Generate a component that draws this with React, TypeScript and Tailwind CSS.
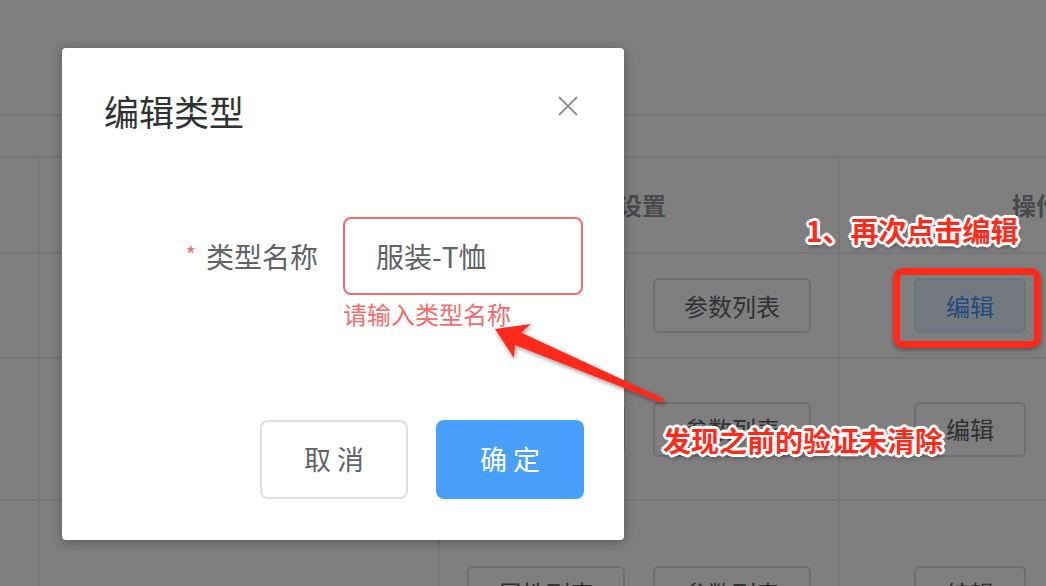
import React from "react";

function TBtn({ children, w = "w-[158px]" }: { children: React.ReactNode; w?: string }) {
  return (
    <div
      className={`flex h-[55px] ${w} shrink-0 items-center justify-center rounded-[6px] border-2 border-[#dcdfe6] bg-white text-[24px] leading-none text-[#606266]`}
    >
      {children}
    </div>
  );
}

function EditBtn({ active = false }: { active?: boolean }) {
  return (
    <div
      className={
        active
          ? "flex h-[55px] w-[112px] shrink-0 items-center justify-center rounded-[6px] border-2 border-[#c9f0ff] bg-[#e8f0ff] text-[24px] leading-none text-[#3f98f8]"
          : "flex h-[55px] w-[112px] shrink-0 items-center justify-center rounded-[6px] border-2 border-[#dcdfe6] bg-white text-[24px] leading-none text-[#606266]"
      }
    >
      编辑
    </div>
  );
}

function DataRow({ h, active = false, name = "" }: { h: string; active?: boolean; name?: string }) {
  return (
    <div className={`flex ${h} shrink-0 border-b-2 border-[#ebeef5]`}>
      <div className="w-[40px] shrink-0 border-r-2 border-[#ebeef5]" />
      <div className="flex w-[400px] shrink-0 items-center justify-center border-r-2 border-[#ebeef5] text-[24px] text-[#606266]">
        {name}
      </div>
      <div className="flex w-[400px] shrink-0 items-center gap-[28px] border-r-2 border-[#ebeef5] pl-[27px]">
        <TBtn>属性列表</TBtn>
        <TBtn>参数列表</TBtn>
      </div>
      <div className="flex flex-1 items-center pl-[74px]">
        <EditBtn active={active} />
      </div>
    </div>
  );
}

const outline =
  "[text-shadow:2px_0_0_#fff,-2px_0_0_#fff,0_2px_0_#fff,0_-2px_0_#fff,2px_2px_0_#fff,-2px_-2px_0_#fff,2px_-2px_0_#fff,-2px_2px_0_#fff,3px_0_0_#fff,-3px_0_0_#fff,0_3px_0_#fff,0_-3px_0_#fff,1px_4px_5px_rgba(0,0,0,0.45)]";

export default function App() {
  return (
    <div className="relative h-[586px] w-[1046px] overflow-hidden bg-white font-['Noto_Sans_CJK_SC','Noto_Sans',sans-serif]">
      {/* underlying page */}
      <div className="flex h-full flex-col">
        <div className="h-[116px] shrink-0 border-b-2 border-[#ebeef5]" />
        <div className="h-[42px] shrink-0 border-b-2 border-[#ebeef5]" />
        <div className="flex h-[96px] shrink-0 border-b-2 border-[#ebeef5] text-[24px] font-bold text-[#909399]">
          <div className="w-[40px] shrink-0 border-r-2 border-[#ebeef5]" />
          <div className="flex w-[400px] shrink-0 items-center justify-center border-r-2 border-[#ebeef5]">
            类型名称
          </div>
          <div className="flex w-[400px] shrink-0 items-center border-r-2 border-[#ebeef5] pl-[130px]">
            属性设置
          </div>
          <div className="flex flex-1 items-center whitespace-nowrap pl-[172px]">操作</div>
        </div>
        <DataRow h="h-[105px]" active name="手机" />
        <DataRow h="h-[142px]" name="电脑" />
        <DataRow h="h-[186px]" name="1" />
      </div>

      {/* modal mask */}
      <div className="absolute inset-0 bg-black/50" />

      {/* dialog */}
      <div className="absolute left-[62px] top-[48px] flex h-[492px] w-[562px] flex-col rounded-[4px] bg-white pt-[43px] shadow-[0_2px_12px_rgba(0,0,0,0.3)]">
        <div className="flex items-start justify-between pl-[42px] pr-[46px]">
          <div className="text-[35px] leading-[40px] text-[#303133]">编辑类型</div>
          <svg width="20" height="20" viewBox="0 0 20 20" className="mt-[5px]">
            <path d="M1 1 L19 19 M19 1 L1 19" stroke="#909399" strokeWidth="2" fill="none" />
          </svg>
        </div>

        <div className="mt-[86px] flex items-start pl-[42px]">
          <div className="flex h-[78px] w-[214px] items-center justify-end text-[28px] text-[#606266]">
            <span className="mb-[6px] mr-[10px] text-[22px] text-[#f56c6c]">*</span>
            类型名称
          </div>
          <div className="ml-[25px] flex flex-col">
            <div className="flex h-[78px] w-[240px] items-center rounded-[8px] border-2 border-[#f56c6c] pl-[31px] text-[28px] text-[#606266]">
              服装-T恤
            </div>
            <div className="mt-[5px] text-[24px] leading-[28px] text-[#f56c6c]">请输入类型名称</div>
          </div>
        </div>

        <div className="mt-[92px] flex justify-end gap-[28px] pr-[40px]">
          <div className="flex h-[79px] w-[148px] items-center justify-center rounded-[8px] border-2 border-[#dcdfe6] bg-white text-[27px] text-[#606266]">
            取&nbsp;消
          </div>
          <div className="flex h-[79px] w-[148px] items-center justify-center rounded-[8px] bg-[#48a0fc] text-[27px] text-white">
            确&nbsp;定
          </div>
        </div>
      </div>

      {/* annotations */}
      <div className="absolute left-[893px] top-[268px] h-[80px] w-[148px] rounded-[10px] border-[7px] border-[#ff2a1a] shadow-[0_2px_4px_rgba(0,0,0,0.35)]" />
      <div
        className={`absolute left-[806px] top-[212px] whitespace-nowrap text-[28px] font-bold leading-[36px] text-[#ff2a1a] ${outline}`}
      >
        1、再次点击编辑
      </div>
      <svg className="pointer-events-none absolute left-0 top-0" width="1046" height="586" viewBox="0 0 1046 586">
        <defs>
          <filter id="sh" x="-20%" y="-20%" width="140%" height="140%">
            <feDropShadow dx="1" dy="2" stdDeviation="2" floodColor="#000" floodOpacity="0.4" />
          </filter>
        </defs>
        <polygon
          points="495,329 531,324 521,332.5 664,399 662,403 515,345 514,358"
          fill="#ff2a1a"
          filter="url(#sh)"
        />
      </svg>
      <div
        className={`absolute left-[663px] top-[422px] whitespace-nowrap text-[28px] font-bold leading-[36px] text-[#ff2a1a] ${outline}`}
      >
        发现之前的验证未清除
      </div>
    </div>
  );
}
